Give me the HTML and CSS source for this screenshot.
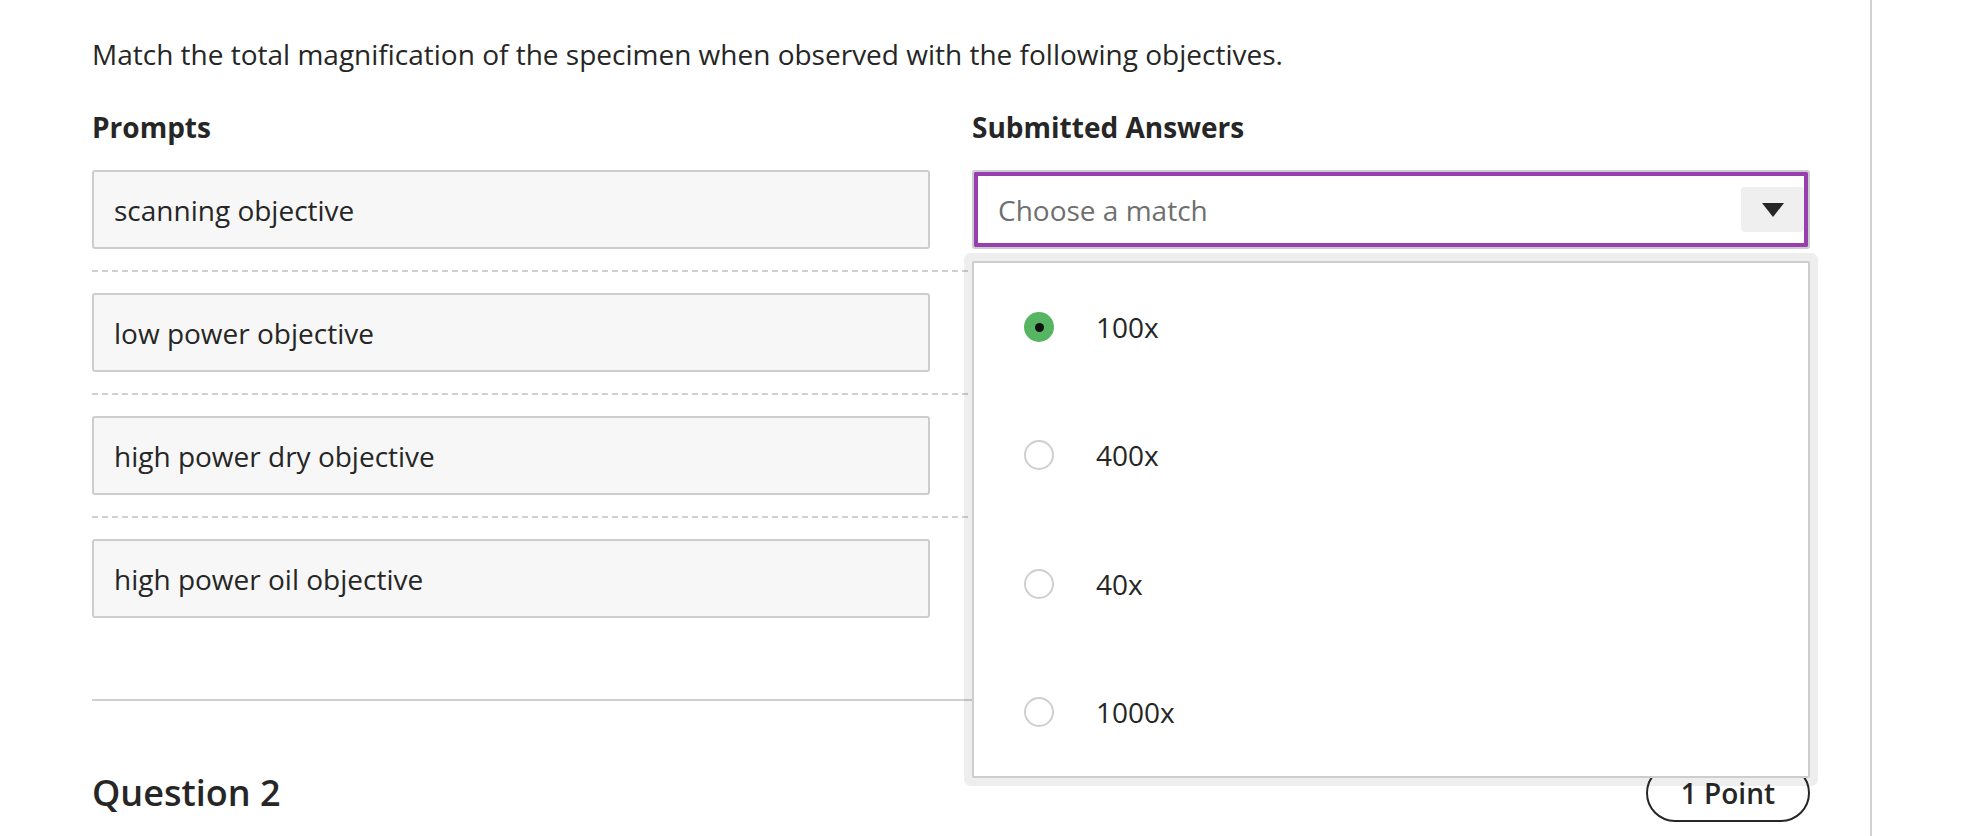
FILE: index.html
```html
<!DOCTYPE html>
<html lang="en">
<head>
<meta charset="utf-8">
<title>Matching question</title>
<link rel="stylesheet" href="styles.css">
</head>
<body>
<div class="page">
  <main class="content">
    <p class="question">Match the total magnification of the specimen when observed with the following objectives.</p>
    <div class="match">
      <div class="col-head">Prompts</div>
      <div class="col-head">Submitted Answers</div>

      <div class="prompt">scanning objective</div>
      <div class="answer">
        <div class="select is-focused">
          <span class="placeholder">Choose a match</span>
          <span class="caret-btn"><span class="caret"></span></span>
        </div>
        <div class="menu">
          <div class="option">
            <span class="radio is-checked"></span><span class="opt-label">100x</span>
          </div>
          <div class="option">
            <span class="radio"></span><span class="opt-label">400x</span>
          </div>
          <div class="option">
            <span class="radio"></span><span class="opt-label">40x</span>
          </div>
          <div class="option">
            <span class="radio"></span><span class="opt-label">1000x</span>
          </div>
        </div>
      </div>

      <div class="sep"></div>

      <div class="prompt">low power objective</div>
      <div class="answer"></div>

      <div class="sep"></div>

      <div class="prompt">high power dry objective</div>
      <div class="answer"></div>

      <div class="sep"></div>

      <div class="prompt">high power oil objective</div>
      <div class="answer"></div>
    </div>

    <div class="divider"></div>

    <div class="q-head">
      <h2 class="q-title">Question 2</h2>
      <span class="points">1 Point</span>
    </div>
  </main>
  <aside class="rail"></aside>
</div>
</body>
</html>
```

FILE: styles.css
```css
* {
  box-sizing: border-box;
}

html, body {
  margin: 0;
  padding: 0;
  background: #ffffff;
}

body {
  font-family: "Open Sans", "Noto Sans", "Liberation Sans", sans-serif;
  color: #262626;
  overflow: hidden;
}

.page {
  display: flex;
  min-height: 100vh;
}

.content {
  width: 1870px;
  flex: none;
  padding: 33px 60px 0 92px;
}

.rail {
  flex: 1;
  border-left: 2px solid #d2d2d2;
}

.question {
  margin: 0;
  font-size: 28px;
  line-height: 42px;
  font-weight: 400;
}

.match {
  margin-top: 31px;
  display: grid;
  grid-template-columns: 1fr 1fr;
  column-gap: 42px;
}

.col-head {
  font-size: 28px;
  line-height: 42px;
  font-weight: 700;
  margin-bottom: 22px;
}

.prompt {
  height: 79px;
  display: flex;
  align-items: center;
  padding: 0 20px;
  background: #f7f7f7;
  border: 2px solid #cdcdcd;
  border-radius: 3px;
  font-size: 28px;
}

.answer {
  position: relative;
}

.sep {
  grid-column: 1 / -1;
  margin: 21px 0;
  height: 2px;
  background: repeating-linear-gradient(to right, #d0d0d0 0 6px, transparent 6px 10px);
}

.select {
  height: 79px;
  display: flex;
  align-items: center;
  padding: 0 4px 0 24px;
  background: #ffffff;
  border: 2px solid #cdcdcd;
  border-radius: 3px;
  font-size: 28px;
}

.select.is-focused {
  box-shadow: inset 0 0 0 4px #973fae;
}

.placeholder {
  flex: 1;
  color: #6f6f6f;
}

.caret-btn {
  width: 63px;
  height: 45px;
  display: flex;
  align-items: center;
  justify-content: center;
  background: #efefef;
  border-radius: 4px;
}

.caret {
  width: 0;
  height: 0;
  border-left: 11px solid transparent;
  border-right: 11px solid transparent;
  border-top: 14px solid #262626;
}

.menu {
  position: absolute;
  top: calc(100% + 12px);
  left: 0;
  right: 0;
  height: 517px;
  z-index: 10;
  display: flex;
  flex-direction: column;
  background: #ffffff;
  border: 2px solid #cdcdcd;
  border-radius: 2px;
  box-shadow: 0 0 0 8px rgba(0, 0, 0, 0.066);
}

.option {
  flex: 1;
  display: flex;
  align-items: center;
  padding-left: 50px;
  font-size: 28px;
}

.radio {
  width: 30px;
  height: 30px;
  flex: none;
  border-radius: 50%;
  border: 2px solid #cfcfcf;
  background: #ffffff;
  margin-right: 42px;
  display: flex;
  align-items: center;
  justify-content: center;
}

.radio.is-checked {
  border-color: #55b562;
  background: #55b562;
}

.radio.is-checked::after {
  content: "";
  width: 9px;
  height: 9px;
  border-radius: 50%;
  background: #111111;
}

.divider {
  margin-top: 81px;
  border-top: 2px solid #d0d0d0;
}

.q-head {
  margin-top: 63px;
  display: flex;
  align-items: center;
  justify-content: space-between;
}

.q-title {
  margin: 0;
  font-size: 36px;
  line-height: 48px;
  font-weight: 600;
}

.points {
  height: 58px;
  display: flex;
  align-items: center;
  padding: 0 33px;
  border: 2px solid #262626;
  border-radius: 30px;
  font-size: 28px;
  font-weight: 600;
}
```
